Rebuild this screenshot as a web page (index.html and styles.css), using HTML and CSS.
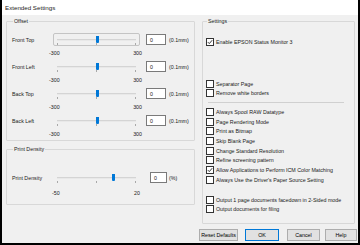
FILE: index.html
```html
<!DOCTYPE html>
<html lang="en">
  <head>
    <meta charset="UTF-8" />
    <title>Extended Settings</title>
    <link rel="stylesheet" href="styles.css">
  </head>
  <body>
    <div class="window">
      <div class="titlebar">Extended Settings</div>
      <div class="main">
        <div class="left">
          <!-- Offset -->
          <fieldset class="group offset">
            <legend>Offset</legend>
            <div class="row">
              <span class="label">Front Top</span>
              <div class="slider focus" style="--v: 0.5"><span class="thumb"></span></div>
              <span class="num">0</span>
              <span class="unit">(0.1mm)</span>
            </div>
            <div class="scale"><span>-300</span><span>300</span></div>
            <div class="row">
              <span class="label">Front Left</span>
              <div class="slider" style="--v: 0.5"><span class="thumb"></span></div>
              <span class="num">0</span>
              <span class="unit">(0.1mm)</span>
            </div>
            <div class="scale"><span>-300</span><span>300</span></div>
            <div class="row">
              <span class="label">Back Top</span>
              <div class="slider" style="--v: 0.5"><span class="thumb"></span></div>
              <span class="num">0</span>
              <span class="unit">(0.1mm)</span>
            </div>
            <div class="scale"><span>-300</span><span>300</span></div>
            <div class="row">
              <span class="label">Back Left</span>
              <div class="slider" style="--v: 0.5"><span class="thumb"></span></div>
              <span class="num">0</span>
              <span class="unit">(0.1mm)</span>
            </div>
            <div class="scale"><span>-300</span><span>300</span></div>
          </fieldset>

          <!-- Print Density -->
          <fieldset class="group density">
            <legend>Print Density</legend>
            <div class="row">
              <span class="label">Print Density</span>
              <div class="slider" style="--v: 0.714"><span class="thumb"></span></div>
              <span class="num short">0</span>
              <span class="unit">(%)</span>
            </div>
            <div class="scale"><span>-50</span><span>20</span></div>
          </fieldset>
        </div>

        <!-- Settings -->
        <fieldset class="group settings">
          <legend>Settings</legend>
          <div class="check"><span class="box on"></span>Enable EPSON Status Monitor 3</div>
          <div class="check gap-big"><span class="box"></span>Separator Page</div>
          <div class="check"><span class="box"></span>Remove white borders</div>
          <div class="sep"></div>
          <div class="check"><span class="box"></span>Always Spool RAW Datatype</div>
          <div class="check"><span class="box"></span>Page Rendering Mode</div>
          <div class="check"><span class="box"></span>Print as Bitmap</div>
          <div class="check"><span class="box"></span>Skip Blank Page</div>
          <div class="check"><span class="box"></span>Change Standard Resolution</div>
          <div class="check"><span class="box"></span>Refine screening pattern</div>
          <div class="check"><span class="box on"></span>Allow Applications to Perform ICM Color Matching</div>
          <div class="check"><span class="box"></span>Always Use the Driver's Paper Source Setting</div>
          <div class="check gap-small"><span class="box"></span>Output 1 page documents facedown in 2-Sided mode</div>
          <div class="check"><span class="box"></span>Output documents for filing</div>
        </fieldset>
      </div>

      <div class="buttons">
        <button class="btn reset">Reset Defaults</button>
        <button class="btn ok">OK</button>
        <button class="btn cancel">Cancel</button>
        <button class="btn help">Help</button>
      </div>
    </div>
  </body>
</html>
```

FILE: styles.css
```css
body {
  margin: 0;
  font-family: "Liberation Sans", Arial, sans-serif;
  font-size: 5.3px;
  color: #1a1a1a;
}
.window {
  width: 360px;
  height: 245px;
  box-sizing: border-box;
  border: 2px solid #000;
  border-top: none;
  background-color: #f0f0f0;
}
.titlebar {
  height: 15px;
  line-height: 15px;
  padding-left: 3px;
  background-color: #fff;
  font-size: 6.2px;
}
.main {
  display: flex;
  gap: 7px;
  padding: 3px 3px 0 4px;
}
.left {
  width: 189px;
  display: flex;
  flex-direction: column;
  gap: 5px;
}
.group {
  margin: 0;
  min-width: 0;
  box-sizing: border-box;
  border: 1px solid #d8d8d8;
  border-radius: 1px;
}
.group legend {
  padding: 0 1px;
  margin-left: 1px;
  line-height: 7px;
}
.offset {
  height: 123px;
  padding: 8px 0 0 5px;
}
.density {
  height: 59px;
  padding: 18px 0 0 5px;
}
.settings {
  width: 153px;
  height: 206px;
  padding: 12.5px 0 0 3px;
}
.row {
  display: flex;
  align-items: center;
  height: 13px;
}
.label {
  width: 41px;
}
.slider {
  position: relative;
  width: 87px;
  height: 13px;
  box-sizing: border-box;
  border: 1px solid transparent;
  border-radius: 2px;
}
.slider.focus {
  border-color: #c4c4c4;
}
.slider::before {
  content: "";
  position: absolute;
  left: 3px;
  right: 3px;
  top: 5px;
  height: 1px;
  background-color: #d4d4d4;
  border-bottom: 1px solid #e8e8e8;
}
.slider::after {
  content: "";
  position: absolute;
  left: 3px;
  right: 3px;
  top: 9px;
  height: 2px;
  background:
    linear-gradient(#a8a8a8, #a8a8a8) 0 0 / 1px 2px no-repeat,
    linear-gradient(#a8a8a8, #a8a8a8) 50% 0 / 1px 2px no-repeat,
    linear-gradient(#a8a8a8, #a8a8a8) 100% 0 / 1px 2px no-repeat;
}
.thumb {
  position: absolute;
  z-index: 1;
  top: 2px;
  width: 3px;
  height: 7px;
  margin-left: -1px;
  background-color: #0078d7;
  border-radius: 0 0 1px 1px;
  left: calc(3px + (100% - 6px) * var(--v));
}
.num {
  width: 20px;
  height: 11px;
  line-height: 10px;
  margin-left: 6px;
  padding-left: 3px;
  box-sizing: border-box;
  border: 1px solid #7a7a7a;
  background-color: #fff;
}
.num.short {
  width: 17px;
  margin-left: 10px;
}
.unit {
  margin-left: 3px;
}
.density .unit {
  margin-left: 2px;
}
.scale {
  display: flex;
  justify-content: space-between;
  width: 93px;
  height: 14px;
  line-height: 14px;
  margin-left: 37px;
}
.density .scale {
  width: 88px;
  margin-left: 40px;
  padding-top: 2px;
}
.check {
  display: flex;
  align-items: center;
  height: 9.7px;
  white-space: nowrap;
}
.box {
  width: 8px;
  height: 8px;
  box-sizing: border-box;
  margin-right: 2px;
  border: 1px solid #333;
  background-color: #fff;
}
.box.on {
  background: #fff url("data:image/svg+xml,%3Csvg xmlns='http://www.w3.org/2000/svg' viewBox='0 0 6 6'%3E%3Cpath d='M0.8 3.1 L2.3 4.6 L5.2 1.2' fill='none' stroke='%23222' stroke-width='0.9'/%3E%3C/svg%3E") center / 6px 6px no-repeat;
}
.gap-big {
  margin-top: 31.5px;
}
.gap-small {
  margin-top: 10.3px;
}
.sep {
  width: 136px;
  height: 1px;
  margin: 4px 0 4px 2px;
  background-color: #d0d0d0;
}
.buttons {
  display: flex;
  padding: 5px 0 0 197px;
}
.btn {
  height: 12px;
  padding: 0;
  font-family: inherit;
  font-size: 5.3px;
  color: #000;
  background-color: #e1e1e1;
  border: 1px solid #adadad;
}
.reset {
  width: 39px;
}
.ok {
  width: 34px;
  margin-left: 7px;
  border-color: #0078d7;
}
.cancel {
  width: 33px;
  margin-left: 8px;
}
.help {
  width: 32px;
  margin-left: 5px;
}
```
